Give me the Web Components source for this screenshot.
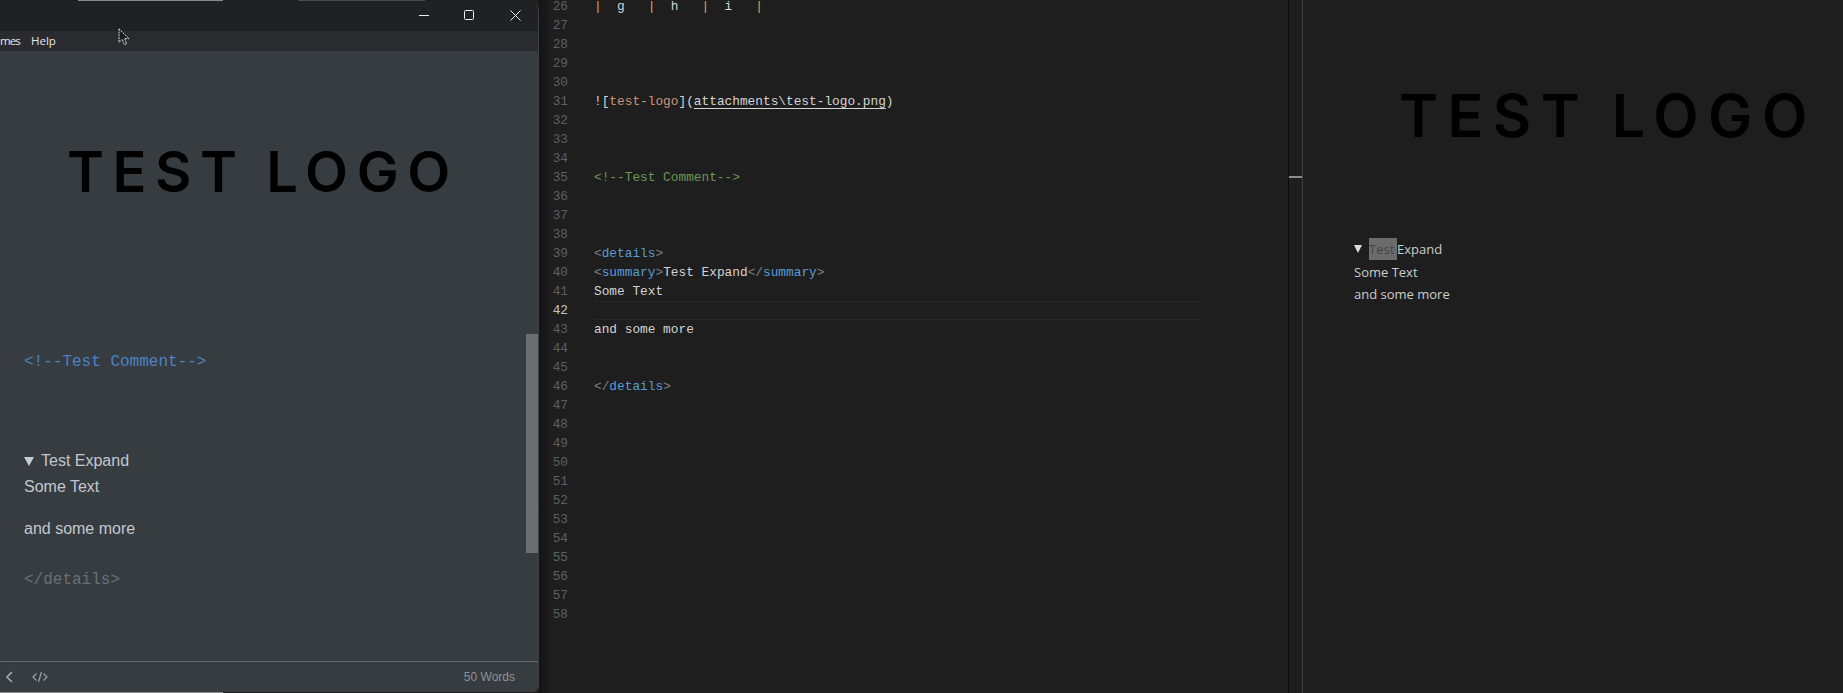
<!DOCTYPE html>
<html><head><meta charset="utf-8"><style>
html,body{margin:0;padding:0;background:#1e1e1e;overflow:hidden}
body{width:1843px;height:693px}
</style></head><body>
<app-shell>
  <note-window></note-window>
  <code-editor></code-editor>
  <split-sash></split-sash>
  <md-preview></md-preview>
</app-shell>
<script>
class AppShell extends HTMLElement{constructor(){super();this.attachShadow({mode:'open'}).innerHTML=`<style>:host{display:flex;width:1843px;height:693px;overflow:hidden;background:#1e1e1e;position:relative}</style><slot></slot>`}}
class LogoMark extends HTMLElement{constructor(){super();this.attachShadow({mode:'open'}).innerHTML=`<style>:host{display:block;font:600 var(--logo-size,57px)/1 Inter,sans-serif;letter-spacing:var(--logo-track,6px);word-spacing:-2px;color:#000;white-space:nowrap}</style>TEST LOGO`}}
class FoldTitle extends HTMLElement{constructor(){super();this.attachShadow({mode:'open'}).innerHTML=`<style>:host{display:flex;align-items:center;gap:var(--tri-gap,6px)}
i{display:block;width:0;height:0;border-left:var(--tri-w,5px) solid transparent;border-right:var(--tri-w,5px) solid transparent;border-top:var(--tri-h,9px) solid var(--tri-c,#c8cdd2)}</style><i></i><span><slot></slot></span>`}}
class NoteWindow extends HTMLElement{constructor(){super();this.attachShadow({mode:'open'}).innerHTML=`<style>
:host{display:flex;flex-direction:column;width:539px;height:693px;flex:none;position:relative;font-family:"Liberation Sans",sans-serif;z-index:1}
.strip{height:1px;background:linear-gradient(90deg,#1e1e1e 0 78px,#8a8a8a 78px 223px,#1e1e1e 223px 298px,#4a4a4a 298px 425px,#1e1e1e 425px);flex:none}
.frame{flex:1;display:flex;flex-direction:column;border-right:1px solid #3d3f43;border-radius:0 10px 6px 0;overflow:hidden;min-height:0}
.title{height:30px;box-sizing:border-box;padding-bottom:2px;background:#202124;display:flex;justify-content:flex-end;align-items:center;flex:none}
.title svg{display:block;margin-right:var(--m)}
.menu{height:20px;box-sizing:border-box;padding:0 0 2px 0;background:#2a2b2f;color:#e6e6e6;font:11.5px "Open Sans",sans-serif;display:flex;align-items:center;gap:13px;flex:none}
.menu span:first-child{width:18px;flex:none;letter-spacing:-.9px;white-space:nowrap}
.body{flex:1;background:#373c40;position:relative;min-height:0;display:flex;flex-direction:column;padding-left:24px;color:#c2c8ce;font-size:16px;overflow:hidden}
logo-mark{margin:93px 0 0 43px;--logo-size:56px;--logo-track:8.6px}
.mono{font:16px/20px "Liberation Mono",monospace}
.cmt{color:#4b82c8;margin-top:152px}
fold-title{margin-top:79px;line-height:20px;--tri-gap:7px;--tri-w:5.5px}
.t1{margin-top:6px;line-height:20px}.t2{margin-top:22px;line-height:20px}
.end{color:#6a6f75;margin-top:31px}
.thumb{position:absolute;right:0;top:283px;width:12px;height:219px;background:#6b6e73}
.status{height:30px;background:#373c40;border-top:1px solid #63666b;flex:none;display:flex;align-items:center;color:#8b9096;font-size:12px;padding-right:23px}
.status svg{display:block}
.status .w{margin-left:auto;color:#8d9298}
.base{height:1px;background:linear-gradient(90deg,#8a8a8a 0 223px,#1e1e1e 223px);flex:none}
.cursor{position:absolute;left:118px;top:28px;width:12px;height:18px}
</style>
<div class="strip"></div>
<div class="frame">
<div class="title">
<svg style="--m:35px" width="10" height="12" viewBox="0 0 10 12"><path d="M0 6.5H10" stroke="#eee" fill="none"/></svg>
<svg style="--m:36px" width="10" height="10" viewBox="0 0 10 10"><rect x=".5" y=".5" width="9" height="9" rx="1" stroke="#eee" fill="none"/></svg>
<svg style="--m:17px" width="11" height="11" viewBox="0 0 11 11"><path d="M.5.5 10.5 10.5M10.5.5.5 10.5" stroke="#eee" fill="none"/></svg>
</div>
<div class="menu"><span>mes</span><span>Help</span></div>
<div class="body">
<logo-mark></logo-mark>
<div class="mono cmt">&lt;!--Test Comment--&gt;</div>
<fold-title>Test Expand</fold-title>
<div class="t1">Some Text</div>
<div class="t2">and some more</div>
<div class="mono end">&lt;/details&gt;</div>
<div class="thumb"></div>
</div>
<div class="status">
<svg style="margin-left:5px" width="9" height="12" viewBox="0 0 9 12"><path d="M7 1 2 6l5 5" stroke="#a6abb0" stroke-width="1.6" fill="none"/></svg>
<svg style="margin-left:18px" width="16" height="12" viewBox="0 0 16 12"><path d="M4.5 2.5 1 6l3.5 3.5M11.5 2.5 15 6l-3.5 3.5M9.5 1 6.5 11" stroke="#9a9fa4" stroke-width="1.3" fill="none"/></svg>
<span class="w">50 Words</span>
</div>
</div>
<div class="base"></div>
<svg class="cursor" viewBox="0 0 13 20"><path d="M1 1V16L4.5 12.5 7 18.5 9.5 17.5 7 11.8H12Z" fill="#1a1a1a" stroke="#fff" stroke-dasharray="2 1"/></svg>`}}
const T=s=>s.replace(/&/g,'&amp;').replace(/</g,'&lt;').replace(/>/g,'&gt;');
const c=(k,s)=>`<span class="${k}">${T(s)}</span>`;
const LINES={26:c('p','|')+'  g   '+c('p','|')+'  h   '+c('p','|')+'  i   '+c('p','|'),
31:'!['+c('s','test-logo')+'](<span class="u">attachments\\test-logo.png</span>)',
35:c('g','<!--Test Comment-->'),
39:c('d','<')+c('b','details')+c('d','>'),
40:c('d','<')+c('b','summary')+c('d','>')+'Test Expand'+c('d','</')+c('b','summary')+c('d','>'),
41:'Some Text',43:'and some more',
46:c('d','</')+c('b','details')+c('d','>')};
class CodeEditor extends HTMLElement{constructor(){super();let h='';for(let n=26;n<=58;n++){h+=`<div class="row${n==42?' cur':''}"><span class="n">${n}</span><span class="c">${LINES[n]||''}</span></div>`}
this.attachShadow({mode:'open'}).innerHTML=`<style>
:host{display:block;width:749px;flex:none;background:#1e1e1e;overflow:hidden;position:relative;font:12.8px/20px "Liberation Mono",monospace;color:#d4d4d4}
.wrap{margin-top:-3px;position:relative}
.row{display:flex;height:19px;white-space:pre}
.n{width:29px;text-align:right;color:#5b6068;flex:none}
.c{margin-left:26px;flex:none;width:607px;box-sizing:border-box;height:19px}
.cur .n{color:#c6c6c6}
.cur .c{border:solid #282828;border-width:1px 0}
.p{color:#d7a94b}.s{color:#ce9178}.g{color:#6a9955}.b{color:#569cd6}.d{color:#808080}
.u{text-decoration:underline;text-underline-offset:3px}
.sh{position:absolute;left:0;top:0;bottom:0;width:12px;background:linear-gradient(90deg,#141414,#1e1e1e)}
</style><div class="wrap">${h}</div><div class="sh"></div>`}}
class SplitSash extends HTMLElement{constructor(){super();this.attachShadow({mode:'open'}).innerHTML=`<style>:host{display:block;width:15px;flex:none;box-sizing:border-box;border-left:1px solid #0d0d0d;border-right:1px solid #404040;position:relative}
i{position:absolute;left:0;right:0;top:176px;height:2px;background:#8c8c8c}</style><i></i>`}}
class MdPreview extends HTMLElement{constructor(){super();this.attachShadow({mode:'open'}).innerHTML=`<style>
:host{flex:1;display:flex;flex-direction:column;background:#1e1e1e;padding-left:51px;color:#cccccc;font:13px/22px "Open Sans",sans-serif;overflow:hidden;min-width:0}
logo-mark{margin:86px 0 0 45px;--logo-size:59px;--logo-track:9.6px}
fold-title{margin-top:93px;--tri-w:4px;--tri-h:8px;--tri-c:#ddd;--tri-gap:7px}
mark{background:#6b6b6b;color:#454545;display:inline-block;width:28px}
.a{margin-top:1px}.a+.a{margin-top:0}
</style>
<logo-mark></logo-mark>
<fold-title><mark>Test </mark>Expand</fold-title>
<div class="a">Some Text</div>
<div class="a">and some more</div>`}}
customElements.define('app-shell',AppShell);
customElements.define('logo-mark',LogoMark);
customElements.define('fold-title',FoldTitle);
customElements.define('note-window',NoteWindow);
customElements.define('code-editor',CodeEditor);
customElements.define('split-sash',SplitSash);
customElements.define('md-preview',MdPreview);
</script>
</body></html>
